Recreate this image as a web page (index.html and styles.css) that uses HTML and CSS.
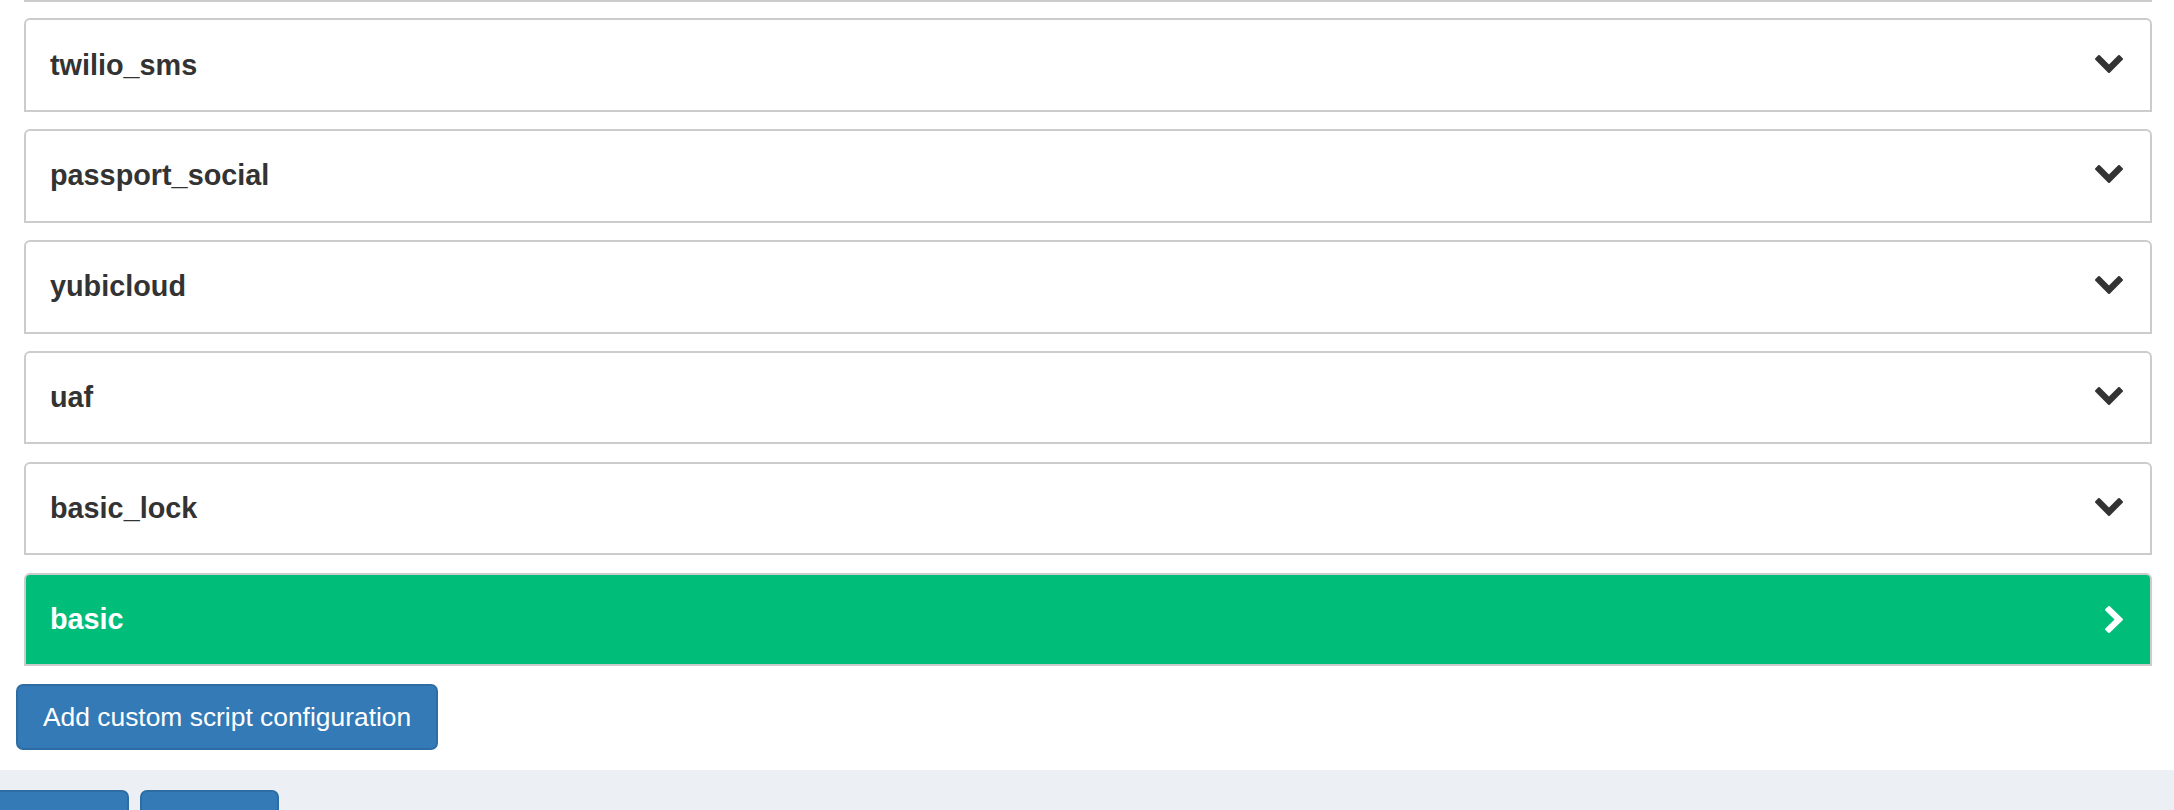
FILE: index.html
```html
<!DOCTYPE html>
<html lang="en">
<head>
<meta charset="utf-8">
<title>Custom scripts</title>
<link rel="stylesheet" href="styles.css">
</head>
<body>
<div class="box">
  <div class="panel-list">
    <div class="prev-edge"></div>
    <div class="panel">
      <span class="title">twilio_sms</span>
      <span class="icon"><svg class="chev-down" viewBox="90 533 1612 1035" width="28" height="18"><path d="M1683 808l-742 741q-19 19-45 19t-45-19l-742-741q-19-19-19-45.5t19-45.5l166-165q19-19 45-19t45 19l531 531 531-531q19-19 45-19t45 19l166 165q19 19 19 45.5t-19 45.5z"/></svg></span>
    </div>
    <div class="panel">
      <span class="title">passport_social</span>
      <span class="icon"><svg class="chev-down" viewBox="90 533 1612 1035" width="28" height="18"><path d="M1683 808l-742 741q-19 19-45 19t-45-19l-742-741q-19-19-19-45.5t19-45.5l166-165q19-19 45-19t45 19l531 531 531-531q19-19 45-19t45 19l166 165q19 19 19 45.5t-19 45.5z"/></svg></span>
    </div>
    <div class="panel">
      <span class="title">yubicloud</span>
      <span class="icon"><svg class="chev-down" viewBox="90 533 1612 1035" width="28" height="18"><path d="M1683 808l-742 741q-19 19-45 19t-45-19l-742-741q-19-19-19-45.5t19-45.5l166-165q19-19 45-19t45 19l531 531 531-531q19-19 45-19t45 19l166 165q19 19 19 45.5t-19 45.5z"/></svg></span>
    </div>
    <div class="panel">
      <span class="title">uaf</span>
      <span class="icon"><svg class="chev-down" viewBox="90 533 1612 1035" width="28" height="18"><path d="M1683 808l-742 741q-19 19-45 19t-45-19l-742-741q-19-19-19-45.5t19-45.5l166-165q19-19 45-19t45 19l531 531 531-531q19-19 45-19t45 19l166 165q19 19 19 45.5t-19 45.5z"/></svg></span>
    </div>
    <div class="panel">
      <span class="title">basic_lock</span>
      <span class="icon"><svg class="chev-down" viewBox="90 533 1612 1035" width="28" height="18"><path d="M1683 808l-742 741q-19 19-45 19t-45-19l-742-741q-19-19-19-45.5t19-45.5l166-165q19-19 45-19t45 19l531 531 531-531q19-19 45-19t45 19l166 165q19 19 19 45.5t-19 45.5z"/></svg></span>
    </div>
    <div class="panel active">
      <span class="title">basic</span>
      <span class="icon"><svg class="chev-right" viewBox="346 26 1036 1612" width="18" height="27" preserveAspectRatio="none"><path d="M1363 877l-742 742q-19 19-45 19t-45-19l-166-166q-19-19-19-45t19-45l531-531-531-531q-19-19-19-45t19-45l166-166q19-19 45-19t45 19l742 742q19 19 19 45t-19 45z"/></svg></span>
    </div>
  </div>
  <div class="actions">
    <button class="btn btn-primary" type="button">Add custom script configuration</button>
  </div>
</div>
<div class="footer-bar">
  <button class="btn btn-primary btn-footer first" type="button"></button>
  <button class="btn btn-primary btn-footer" type="button"></button>
</div>
</body>
</html>
```

FILE: styles.css
```css
html, body {
  margin: 0;
  padding: 0;
  overflow: hidden;
  background: #ffffff;
}

body {
  font-family: "Liberation Sans", Arial, Helvetica, sans-serif;
  color: #333333;
}

.box {
  padding: 0 22px 20px 16px;
  background: #ffffff;
}

.panel-list {
  margin-left: 8px;
}

.prev-edge {
  height: 2px;
  background: #cccccc;
}

.panel {
  box-sizing: border-box;
  height: 93.6px;
  margin-top: 17.26px;
  border: 2px solid #cccccc;
  border-radius: 6px 6px 0 0;
  padding: 0 27px 0 24px;
  display: flex;
  align-items: center;
  justify-content: space-between;
  background: #ffffff;
}

.prev-edge + .panel {
  margin-top: 16.3px;
}

.title {
  font-size: 28.8px;
  font-weight: bold;
  color: #333333;
}

.icon {
  width: 28px;
  display: flex;
  justify-content: flex-end;
  align-items: center;
}

.icon svg {
  display: block;
  fill: #333333;
}

.chev-down {
  margin-top: -3px;
}

.panel.active {
  background: #00bd7a;
}

.panel.active .title {
  color: #ffffff;
}

.panel.active .icon svg {
  fill: #ffffff;
}

.actions {
  padding-top: 18.1px;
  display: flex;
}

.btn {
  box-sizing: border-box;
  font-family: "Liberation Sans", Arial, Helvetica, sans-serif;
  border-radius: 7px;
  cursor: pointer;
}

.btn-primary {
  background: #337ab7;
  border: 2px solid #2e6da4;
  color: #ffffff;
}

.actions .btn {
  height: 66px;
  padding: 0 25px;
  font-size: 26.4px;
  font-weight: normal;
  display: inline-flex;
  align-items: center;
}

.footer-bar {
  box-sizing: border-box;
  background: #ecf0f5;
  height: 40px;
  padding-top: 20px;
  display: flex;
  gap: 11px;
  align-items: flex-start;
  overflow: hidden;
}

.btn-footer {
  width: 139px;
  height: 30px;
  padding: 0;
}

.btn-footer.first {
  margin-left: -10px;
}
```
